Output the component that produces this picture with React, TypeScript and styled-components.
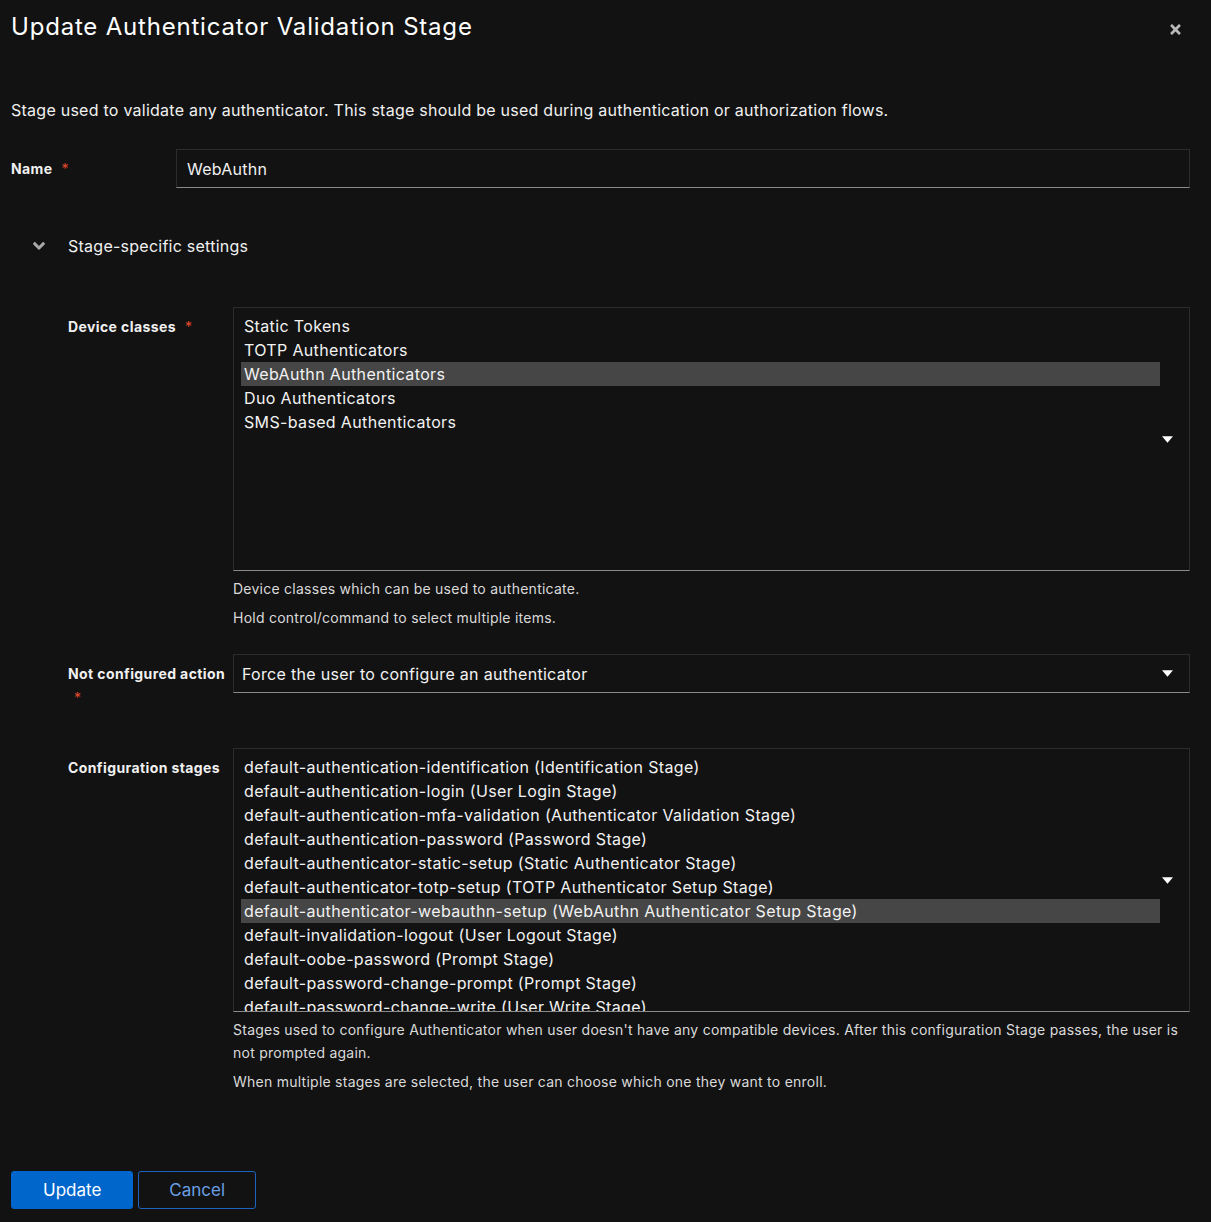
import React from "react";
import styled, { createGlobalStyle } from "styled-components";

const GlobalStyle = createGlobalStyle`
  html, body {
    margin: 0;
    padding: 0;
    background: #121212;
    overflow: hidden;
  }
  body {
    font-family: Inter, "Open Sans", sans-serif;
    color: #f0f0f0;
  }
  * { box-sizing: border-box; }
`;

const Page = styled.div`
  min-height: 100vh;
  background: #121212;
  padding: 11px 21px 13px 11px;
  display: flex;
  flex-direction: column;
`;

const Header = styled.header`
  display: flex;
  align-items: center;
  justify-content: space-between;
  height: 32px;
`;

const Title = styled.h1`
  margin: 0;
  font-family: Inter, "Open Sans", sans-serif;
  font-weight: 400;
  font-size: 24px;
  line-height: 32px;
  letter-spacing: 0.8px;
  color: #ffffff;
`;

const CloseButton = styled.button`
  background: none;
  border: 0;
  padding: 0;
  width: 13px;
  height: 20px;
  margin-right: 8px;
  margin-top: 4px;
  display: flex;
  align-items: center;
  justify-content: center;
  color: #b8b8b8;
  cursor: pointer;
`;

const Description = styled.p`
  margin: 55px 0 0;
  font-size: 16px;
  line-height: 24px;
  letter-spacing: 0.25px;
  color: #f0f0f0;
`;

const FieldRow = styled.div<{ $top: number }>`
  display: grid;
  grid-template-columns: 165px 1fr;
  margin-top: ${(p) => p.$top}px;
`;

const Label = styled.label`
  padding-top: 8px;
  font-size: 14px;
  line-height: 24px;
  font-weight: 700;
  letter-spacing: 0.4px;
  color: #f0f0f0;
  padding-right: 6px;
  white-space: nowrap;
`;

const Required = styled.span<{ $block?: boolean }>`
  color: #e5492f;
  font-weight: 400;
  margin-left: ${(p) => (p.$block ? "6px" : "9px")};
  display: ${(p) => (p.$block ? "block" : "inline")};
`;

const Control = styled.div`
  display: flex;
  flex-direction: column;
  min-width: 0;
`;

const TextInput = styled.div`
  height: 39px;
  border: 1px solid #2c2c2c;
  border-bottom-color: #8a8a8a;
  padding: 0 10px;
  display: flex;
  align-items: center;
  font-size: 16px;
  letter-spacing: 0.25px;
  color: #f0f0f0;
`;

const Section = styled.section`
  margin-top: 38px;
  padding-left: 57px;
  display: flex;
  flex-direction: column;
`;

const SectionToggle = styled.button`
  background: none;
  border: 0;
  padding: 8px 0;
  margin-left: -57px;
  display: flex;
  align-items: center;
  font-family: inherit;
  font-size: 16px;
  line-height: 24px;
  letter-spacing: 0.25px;
  color: #f0f0f0;
  cursor: pointer;
  text-align: left;
`;

const ToggleIcon = styled.span`
  width: 57px;
  padding-left: 22px;
  display: flex;
  align-items: center;
  color: #a8a8a8;
`;

const ListBox = styled.div<{ $height: number }>`
  height: ${(p) => p.$height}px;
  border: 1px solid #2c2c2c;
  border-bottom-color: #8a8a8a;
  display: flex;
  overflow: hidden;
`;

const OptionList = styled.div`
  flex: 1;
  padding: 6px 0 0 7px;
  overflow: hidden;
`;

const Option = styled.div<{ $selected?: boolean }>`
  height: 24px;
  line-height: 24px;
  padding-left: 3px;
  font-size: 16px;
  letter-spacing: 0.35px;
  white-space: nowrap;
  color: #f2f2f2;
  background: ${(p) => (p.$selected ? "#464646" : "transparent")};
`;

const CaretCell = styled.div`
  width: 29px;
  display: flex;
  align-items: center;
  justify-content: flex-start;
  padding-left: 2px;
  color: #ffffff;
`;

const SelectBox = styled.div`
  height: 39px;
  border: 1px solid #2c2c2c;
  border-bottom-color: #8a8a8a;
  display: flex;
  align-items: center;
  font-size: 16px;
  letter-spacing: 0.3px;
  color: #f2f2f2;
`;

const SelectValue = styled.span`
  flex: 1;
  padding-left: 8px;
`;

const Helper = styled.p`
  margin: 6px 0 0;
  font-size: 14px;
  line-height: 23px;
  letter-spacing: 0.25px;
  color: #dadada;
`;

const Actions = styled.div`
  margin-top: 78px;
  display: flex;
  gap: 5px;
`;

const Button = styled.button<{ $primary?: boolean }>`
  height: 38px;
  padding: 0 ${(p) => (p.$primary ? 31 : 30)}px;
  border-radius: 3px;
  font-family: inherit;
  font-size: 17px;
  cursor: pointer;
  background: ${(p) => (p.$primary ? "#0066cc" : "transparent")};
  color: ${(p) => (p.$primary ? "#ffffff" : "#6a9fe2")};
  border: 1px solid ${(p) => (p.$primary ? "#0066cc" : "#1c64c0")};
`;

const Times = () => (
  <svg width="13" height="15" viewBox="0 0 352 512" fill="currentColor">
    <path d="M242.72 256l100.07-100.07c12.28-12.28 12.28-32.19 0-44.48l-22.24-22.24c-12.28-12.28-32.19-12.28-44.48 0L176 189.28 75.93 89.21c-12.28-12.28-32.19-12.28-44.48 0L9.21 111.45c-12.28 12.28-12.28 32.19 0 44.48L109.28 256 9.21 356.07c-12.28 12.28-12.28 32.19 0 44.48l22.24 22.24c12.28 12.28 32.2 12.28 44.48 0L176 322.72l100.07 100.07c12.28 12.28 32.2 12.28 44.48 0l22.24-22.240c12.28-12.28 12.28-32.19 0-44.48L242.72 256z" />
  </svg>
);

const AngleDown = () => (
  <svg width="12" height="8" viewBox="0 150 320 215" fill="currentColor">
    <path d="M143 352.3L7 216.3c-9.4-9.4-9.4-24.6 0-33.9l22.6-22.6c9.4-9.4 24.6-9.4 33.9 0l96.4 96.4 96.4-96.4c9.4-9.4 24.6-9.4 33.9 0l22.6 22.6c9.4 9.4 9.4 24.6 0 33.9l-136 136c-9.2 9.4-24.4 9.4-33.8 0z" />
  </svg>
);

const Caret = () => (
  <svg width="11" height="7" viewBox="0 0 10 6" fill="currentColor">
    <path d="M0 0 H10 L5 6 Z" />
  </svg>
);

const deviceClasses = [
  "Static Tokens",
  "TOTP Authenticators",
  "WebAuthn Authenticators",
  "Duo Authenticators",
  "SMS-based Authenticators",
];

const configStages = [
  "default-authentication-identification (Identification Stage)",
  "default-authentication-login (User Login Stage)",
  "default-authentication-mfa-validation (Authenticator Validation Stage)",
  "default-authentication-password (Password Stage)",
  "default-authenticator-static-setup (Static Authenticator Stage)",
  "default-authenticator-totp-setup (TOTP Authenticator Setup Stage)",
  "default-authenticator-webauthn-setup (WebAuthn Authenticator Setup Stage)",
  "default-invalidation-logout (User Logout Stage)",
  "default-oobe-password (Prompt Stage)",
  "default-password-change-prompt (Prompt Stage)",
  "default-password-change-write (User Write Stage)",
];

export default function App() {
  return (
    <>
      <GlobalStyle />
      <Page>
        <Header>
          <Title>Update Authenticator Validation Stage</Title>
          <CloseButton aria-label="Close">
            <Times />
          </CloseButton>
        </Header>
        <Description>
          Stage used to validate any authenticator. This stage should be used during authentication or
          authorization flows.
        </Description>

        <FieldRow $top={27}>
          <Label>
            Name<Required>*</Required>
          </Label>
          <Control>
            <TextInput>WebAuthn</TextInput>
          </Control>
        </FieldRow>

        <Section>
          <SectionToggle>
            <ToggleIcon>
              <AngleDown />
            </ToggleIcon>
            Stage-specific settings
          </SectionToggle>

          <FieldRow $top={41}>
            <Label>
              Device classes<Required>*</Required>
            </Label>
            <Control>
              <ListBox $height={264}>
                <OptionList>
                  {deviceClasses.map((d) => (
                    <Option key={d} $selected={d === "WebAuthn Authenticators"}>
                      {d}
                    </Option>
                  ))}
                </OptionList>
                <CaretCell>
                  <Caret />
                </CaretCell>
              </ListBox>
              <Helper>Device classes which can be used to authenticate.</Helper>
              <Helper>Hold control/command to select multiple items.</Helper>
            </Control>
          </FieldRow>

          <FieldRow $top={25}>
            <Label>
              Not configured action
              <Required $block>*</Required>
            </Label>
            <Control>
              <SelectBox>
                <SelectValue>Force the user to configure an authenticator</SelectValue>
                <CaretCell>
                  <Caret />
                </CaretCell>
              </SelectBox>
            </Control>
          </FieldRow>

          <FieldRow $top={38}>
            <Label>Configuration stages</Label>
            <Control>
              <ListBox $height={264}>
                <OptionList>
                  {configStages.map((s) => (
                    <Option
                      key={s}
                      $selected={s.startsWith("default-authenticator-webauthn-setup")}
                    >
                      {s}
                    </Option>
                  ))}
                </OptionList>
                <CaretCell>
                  <Caret />
                </CaretCell>
              </ListBox>
              <Helper>
                Stages used to configure Authenticator when user doesn't have any compatible devices. After
                this configuration Stage passes, the user is not prompted again.
              </Helper>
              <Helper>When multiple stages are selected, the user can choose which one they want to enroll.</Helper>
            </Control>
          </FieldRow>
        </Section>

        <Actions>
          <Button $primary>Update</Button>
          <Button>Cancel</Button>
        </Actions>
      </Page>
    </>
  );
}
